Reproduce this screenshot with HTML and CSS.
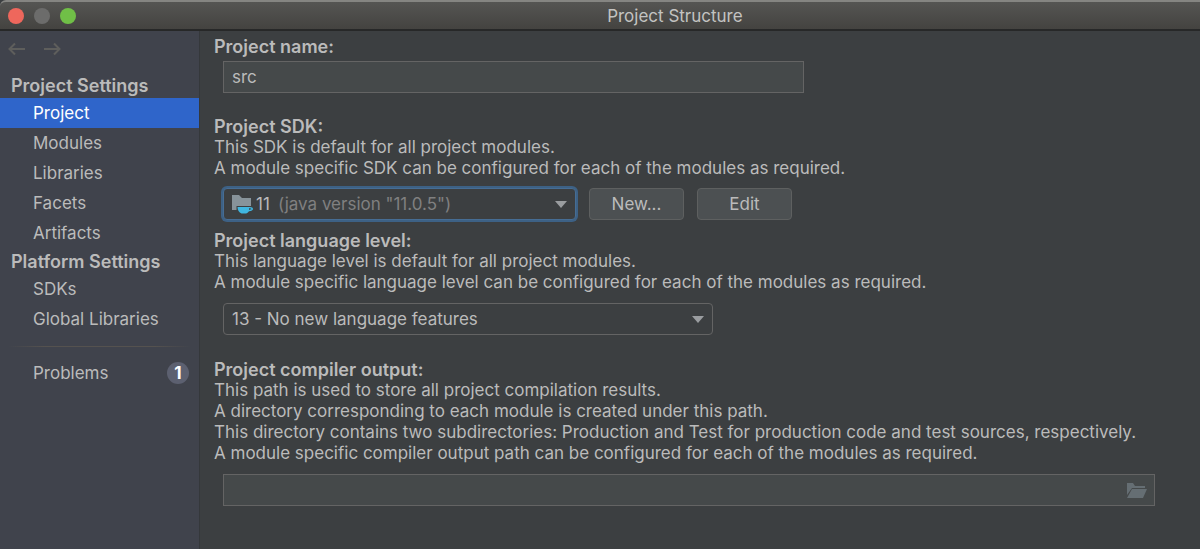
FILE: index.html
```html
<!DOCTYPE html>
<html lang="en">
<head>
<meta charset="utf-8">
<title>Project Structure</title>
<link rel="stylesheet" href="styles.css">
</head>
<body>
<div class="window">
  <header class="titlebar">
    <div class="lights">
      <button class="light light-close" aria-label="Close"></button>
      <button class="light light-minimize" aria-label="Minimize" disabled></button>
      <button class="light light-zoom" aria-label="Zoom"></button>
    </div>
    <h1 class="title">Project Structure</h1>
  </header>
  <div class="body">
    <aside class="sidebar">
      <div class="history">
        <button class="history-button" aria-label="Back"><svg width="18" height="14" viewBox="0 0 18 14"><path d="M17 7H2M7 1.5L1.5 7L7 12.5"/></svg></button>
        <button class="history-button" aria-label="Forward"><svg width="18" height="14" viewBox="0 0 18 14"><path d="M1 7H16M11 1.5L16.500 7L11 12.5"/></svg></button>
      </div>
      <nav class="nav">
        <h2 class="group">Project Settings</h2>
        <a class="item item-selected" href="#project">Project</a>
        <a class="item" href="#modules">Modules</a>
        <a class="item" href="#libraries">Libraries</a>
        <a class="item" href="#facets">Facets</a>
        <a class="item" href="#artifacts">Artifacts</a>
        <h2 class="group">Platform Settings</h2>
        <a class="item" href="#sdks">SDKs</a>
        <a class="item" href="#global">Global Libraries</a>
        <hr class="divider">
        <a class="item" href="#problems">Problems<span class="count">1</span></a>
      </nav>
    </aside>
    <main class="content" id="project">
      <section class="section">
        <label class="heading" for="name">Project name:</label>
        <input class="field field-name" id="name" type="text" value="src">
      </section>
      <section class="section">
        <label class="heading" for="sdk">Project SDK:</label>
        <p class="text">This SDK is default for all project modules.</p>
        <p class="text">A module specific SDK can be configured for each of the modules as required.</p>
        <div class="row">
          <div class="combo combo-sdk">
            <select class="select select-sdk" id="sdk"><option>(java version "11.0.5")</option></select>
            <span class="sdk-name">
              <svg width="21" height="20" viewBox="0 0 21 20"><path fill="#87939a" d="M0 1h7l3 3h9v8H4.500v4H0z"/><path fill="#40b6e0" fill-rule="evenodd" d="M5.500 13h12c2.500 0 3.500.8 3.500 2s-1.500 2.200-4 2.200c-.8 1.200-2 1.800-3 2.300H9.500c-2.500-1-4-3.500-4-6.500zm11.500 1.200v1.600c1.500 0 2.300-.2 2.300-.8s-.8-.8-2.300-.8z"/></svg>
              <span>11</span>
            </span>
            <svg class="arrow" width="12" height="8" viewBox="0 0 12 8"><path d="M0 0h12L6 7z"/></svg>
          </div>
          <button class="button">New...</button>
          <button class="button">Edit</button>
        </div>
      </section>
      <section class="section section-level">
        <label class="heading" for="level">Project language level:</label>
        <p class="text">This language level is default for all project modules.</p>
        <p class="text">A module specific language level can be configured for each of the modules as required.</p>
        <div class="row row-spaced">
          <div class="combo combo-level">
            <select class="select" id="level"><option>13 - No new language features</option></select>
            <svg class="arrow" width="12" height="8" viewBox="0 0 12 8"><path d="M0 0h12L6 7z"/></svg>
          </div>
        </div>
      </section>
      <section class="section">
        <label class="heading" for="output">Project compiler output:</label>
        <p class="text">This path is used to store all project compilation results.</p>
        <p class="text">A directory corresponding to each module is created under this path.</p>
        <p class="text">This directory contains two subdirectories: Production and Test for production code and test sources, respectively.</p>
        <p class="text">A module specific compiler output path can be configured for each of the modules as required.</p>
        <div class="row row-spaced output">
          <input class="field field-output" id="output" type="text">
          <button class="browse" aria-label="Browse"><svg width="20" height="16" viewBox="0 0 20 16"><path d="M0 0h6l2 3h10v2H5L0 12zM5 6h15l-4 9H0z"/></svg></button>
        </div>
      </section>
    </main>
  </div>
</div>
</body>
</html>
```
FILE: styles.css
```css
* {
  box-sizing: border-box;
}

body {
  margin: 0;
  background: #3c3f41;
  color: #bbbbbb;
  font: 17px/21px Inter, "Liberation Sans", sans-serif;
}

button,
input,
select {
  margin: 0;
  color: inherit;
  font: inherit;
}

h1,
h2,
p {
  margin: 0;
}

.window {
  display: flex;
  flex-direction: column;
  min-height: 100vh;
}

.titlebar {
  display: grid;
  grid-template-columns: 4fr auto 3fr;
  align-items: center;
  height: 31px;
  padding: 0 8px;
  border-top: 2px solid #858582;
  border-bottom: 2px solid #272828;
  background: linear-gradient(#555553, #444340);
  border-radius: 6px 0 0 0;
}

.lights {
  display: flex;
  gap: 10px;
}

.light {
  width: 16px;
  height: 16px;
  padding: 0;
  border: 0;
  border-radius: 50%;
}

.light-close {
  background: #ee675c;
}

.light-minimize {
  background: #6c6c6b;
}

.light-zoom {
  background: #70bf47;
}

.title {
  grid-column: 2;
  padding-top: 2px;
  font-size: 17px;
  font-weight: 400;
  color: #c3c3c1;
}

.body {
  display: flex;
  flex: 1;
}

.sidebar {
  flex: none;
  width: 200px;
  background: #40434c;
  border-right: 1px solid #35383b;
}

.history {
  display: flex;
  gap: 17px;
  height: 41px;
  padding: 11px 8px 0;
}

.history-button {
  width: 18px;
  height: 14px;
  padding: 0;
  border: 0;
  background: none;
}

.history-button svg {
  display: block;
  fill: none;
  stroke: #5e5e5c;
  stroke-width: 2;
}

.group {
  padding: 2px 0 0 11px;
  font-size: 18px;
  font-weight: 600;
  line-height: 24px;
}

.item {
  display: flex;
  align-items: center;
  justify-content: space-between;
  height: 30px;
  padding: 0 10px 0 33px;
  color: inherit;
  text-decoration: none;
}

.item-selected {
  background: #2f65ca;
  color: #ffffff;
}

.divider {
  height: 1px;
  margin: 12px 8px 11px;
  border: 0;
  background: linear-gradient(90deg, transparent, #55524f 20%, #55524f 80%, transparent);
}

.count {
  width: 22px;
  height: 22px;
  border-radius: 50%;
  background: #5c6070;
  color: #ffffff;
  font-weight: 700;
  line-height: 22px;
  text-align: center;
}

.content {
  flex: 1;
  min-width: 0;
  padding: 5px 14px;
}

.section {
  margin-bottom: 24px;
}

.section:first-child {
  margin-bottom: 23px;
}

.section-level {
  margin-top: -14px;
}

.heading {
  display: block;
  font-size: 18px;
  font-weight: 600;
}

.row {
  display: flex;
  gap: 13px;
  margin: 9px 0 0 9px;
}

.row-spaced {
  margin-top: 10px;
}

.field {
  display: block;
  height: 32px;
  padding: 0 8px;
  border: 1px solid #646464;
  background: #45494a;
  outline: 0;
}

.field-name {
  width: 581px;
  max-width: 100%;
  margin: 4px 0 0 9px;
}

.combo {
  position: relative;
}

.combo-sdk {
  width: 353px;
}

.combo-level {
  width: 490px;
}

.select {
  display: block;
  width: 100%;
  height: 32px;
  padding: 0 8px;
  border: 1px solid #646464;
  border-radius: 4px;
  background: #3c3f41;
  appearance: none;
}

.select-sdk {
  padding-left: 54px;
  border-color: #466d94;
  box-shadow: 0 0 0 2px #3d6185;
  color: #808080;
  outline: 0;
}

.sdk-name {
  position: absolute;
  top: 0;
  left: 9px;
  display: flex;
  align-items: center;
  gap: 3px;
  height: 32px;
  pointer-events: none;
}

.arrow {
  position: absolute;
  top: 13px;
  right: 9px;
  fill: #9a9da0;
  pointer-events: none;
}

.button {
  width: 95px;
  height: 32px;
  padding: 0;
  border: 1px solid #5e6060;
  border-radius: 4px;
  background: #4c5052;
}

.output {
  position: relative;
  margin-right: 31px;
}

.field-output {
  flex: 1;
  padding-right: 36px;
}

.browse {
  position: absolute;
  top: 9px;
  right: 8px;
  width: 20px;
  height: 16px;
  padding: 0;
  border: 0;
  background: none;
}

.browse svg {
  display: block;
  fill: #656e73;
}
```
